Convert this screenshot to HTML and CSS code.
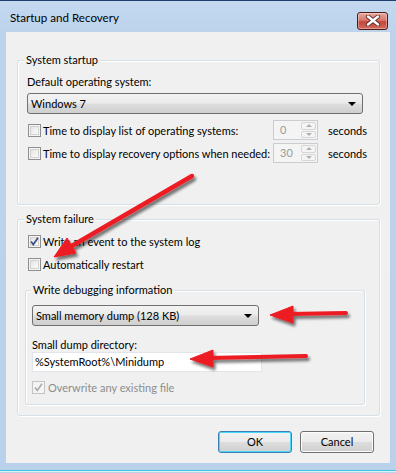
FILE: index.html
```html
<!DOCTYPE html>
<html>
<head>
<meta charset="utf-8">
<link rel="stylesheet" href="styles.css">
</head>
<body>
<div class="window">
  <div class="titlebar">
    <span class="title">Startup and Recovery</span>
    <span class="close">
      <svg width="16" height="11" viewBox="0 0 16 11">
        <path d="M3 1.5 L13 9.5 M13 1.5 L3 9.5" stroke="#5a2a26" stroke-width="4.2" stroke-linecap="round"/>
        <path d="M3 1.5 L13 9.5 M13 1.5 L3 9.5" stroke="#ffffff" stroke-width="2.4" stroke-linecap="round"/>
      </svg>
    </span>
  </div>
  <div class="client">
    <div class="group g1">
      <div class="legend">System startup</div>
      <div class="label l1">Default operating system:</div>
      <div class="combo combo-os"><span>Windows 7</span><i class="caret"></i></div>
      <div class="timerow r1">
        <span class="cb"></span>
        <span class="rowtext">Time to display list of operating systems:</span>
        <span class="spin"><span class="spinval">0</span><span class="spinbtns"><i class="up"></i><i class="down"></i></span></span>
        <span class="unit">seconds</span>
      </div>
      <div class="timerow r2">
        <span class="cb"></span>
        <span class="rowtext">Time to display recovery options when needed:</span>
        <span class="spin"><span class="spinval">30</span><span class="spinbtns"><i class="up"></i><i class="down"></i></span></span>
        <span class="unit">seconds</span>
      </div>
    </div>

    <div class="group g2">
      <div class="legend">System failure</div>
      <div class="checkrow c1"><span class="cb checked"><svg width="11" height="11" viewBox="0 0 11 11"><path d="M2 5.5 L4.3 8.5 L9 1.8" fill="none" stroke="#3d4f86" stroke-width="1.8"/></svg></span><span>Write an event to the system log</span></div>
      <div class="checkrow c2"><span class="cb"></span><span>Automatically restart</span></div>

      <div class="group g3">
        <div class="legend">Write debugging information</div>
        <div class="combo combo-dump"><span>Small memory dump (128 KB)</span><i class="caret"></i></div>
        <div class="label l2">Small dump directory:</div>
        <div class="textbox">%SystemRoot%\Minidump</div>
        <div class="checkrow c3 disabled"><span class="cb dis"><svg width="11" height="11" viewBox="0 0 11 11"><path d="M2 5.5 L4.3 8.5 L9 1.8" fill="none" stroke="#a8a8a8" stroke-width="1.5"/></svg></span><span>Overwrite any existing file</span></div>
      </div>
    </div>

    <div class="buttons">
      <div class="btn default">OK</div>
      <div class="btn">Cancel</div>
    </div>
  </div>
  <div class="bottomline"></div>

  <svg class="arrows" width="396" height="473" viewBox="0 0 396 473">
    <defs>
      <filter id="sh" x="-20%" y="-20%" width="140%" height="160%">
        <feGaussianBlur in="SourceAlpha" stdDeviation="1.6"/>
        <feOffset dx="2" dy="3" result="b"/>
        <feComponentTransfer><feFuncA type="linear" slope="0.55"/></feComponentTransfer>
        <feMerge><feMergeNode/><feMergeNode in="SourceGraphic"/></feMerge>
      </filter>
    </defs>
    <g filter="url(#sh)" fill="#ec1b23" stroke="#ec1b23">
      <line x1="192" y1="176" x2="70" y2="247" stroke-width="4.5" stroke-linecap="round"/>
      <polygon points="54,257 76,253 67,238" stroke-width="1"/>
      <line x1="346" y1="313" x2="288" y2="314" stroke-width="4" stroke-linecap="round"/>
      <polygon points="270,315 293,306 293,323" stroke-width="1"/>
      <line x1="306" y1="356" x2="208" y2="358" stroke-width="4" stroke-linecap="round"/>
      <polygon points="190,359 213,350 213,367" stroke-width="1"/>
    </g>
  </svg>
</div>
</body>
</html>
```

FILE: styles.css
```css
* { box-sizing: border-box; }
html, body { margin: 0; padding: 0; background: #ffffff; }
body {
  font-family: Lato, "Liberation Sans", sans-serif;
  font-size: 11px;
  color: #000;
}
.window {
  position: relative;
  width: 396px;
  height: 473px;
  background: linear-gradient(#c4d9f0 0px, #bcd3ec 32px, #b9d1ea 100%);
  border-top: 1px solid #1d3f6e;
}
.titlebar {
  height: 31px;
  display: flex;
  align-items: center;
  justify-content: space-between;
  padding: 0 8px 0 10px;
}
.title {
  font-size: 11.6px;
  line-height: 16px;
  margin-top: 2px;
}
.close {
  width: 31px;
  height: 18px;
  margin-top: 8px;
  border: 1px solid #4e1a16;
  border-radius: 3px;
  background: linear-gradient(#e8a99d 0%, #d9786c 45%, #c7453a 55%, #d06a5c 100%);
  display: flex;
  align-items: center;
  justify-content: center;
  box-shadow: inset 0 0 0 1px rgba(255,255,255,0.35);
}
.close svg { display: block; }
.client {
  margin: 0 6px;
  height: 431px;
  background: #f0f0f0;
  padding-top: 28px;
}
.bottomline {
  margin-top: 7px;
  height: 1px;
  background: #3ec2de;
  box-shadow: 0 1px 0 #d9f3f9;
}

.group {
  border: 1px solid #d5dfe5;
  border-radius: 3px;
  box-shadow: inset 1px 1px 0 #ffffff, 1px 1px 0 #ffffff;
}
.legend {
  width: fit-content;
  background: #f0f0f0;
  padding: 0 2px;
  line-height: 16px;
  margin-top: -9px;
}
.g1 {
  margin: 0 10px 0 11px;
  height: 145px;
  padding-left: 9px;
}
.g1 .legend { margin-left: -3px; }
.label { line-height: 16px; }
.l1 { margin-top: 6px; }
.combo {
  height: 21px;
  border: 1px solid #707070;
  border-radius: 3px;
  background: linear-gradient(#f3f3f3 0%, #ebebeb 48%, #dddddd 52%, #cfcfcf 100%);
  display: flex;
  align-items: center;
  justify-content: space-between;
  padding: 0 6px 0 3px;
  line-height: 16px;
}
.caret {
  width: 0; height: 0;
  border-left: 4px solid transparent;
  border-right: 4px solid transparent;
  border-top: 4px solid #000;
}
.combo-os { width: 336px; margin-top: 3px; }

.timerow {
  display: grid;
  grid-template-columns: 13px 232px 45px auto;
  column-gap: 0;
  align-items: center;
  height: 20px;
  margin-left: 1px;
}
.r1 { margin-top: 6px; }
.r2 { margin-top: 3px; }
.rowtext { padding-left: 2px; white-space: nowrap; }
.unit { padding-left: 10px; }
.spin {
  height: 20px;
  border: 1px solid #c9cdd1;
  background: #f4f4f4;
  display: flex;
  justify-content: space-between;
  padding: 1px;
}
.spinval { color: #9a9a9a; padding-left: 5px; line-height: 16px; }
.spinbtns {
  width: 15px;
  display: flex;
  flex-direction: column;
  gap: 1px;
}
.spinbtns i {
  flex: 1;
  border: 1px solid #d6d6d6;
  border-radius: 2px;
  background: #f4f4f4;
  display: flex;
  align-items: center;
  justify-content: center;
}
.spinbtns i::after {
  content: "";
  width: 0; height: 0;
  border-left: 3px solid transparent;
  border-right: 3px solid transparent;
}
.spinbtns .up::after { border-bottom: 3px solid #b0b0b0; }
.spinbtns .down::after { border-top: 3px solid #b0b0b0; }

.cb {
  width: 13px;
  height: 13px;
  border: 1px solid #8f8f8f;
  background: linear-gradient(135deg, #dcdcdc 0%, #f4f4f4 60%, #ffffff 100%);
  box-shadow: inset 0 0 0 1px #f4f4f4, inset 0 0 0 2px #d2d2d2;
  display: flex;
  align-items: center;
  justify-content: center;
}
.cb svg { display: block; }
.cb.dis {
  border-color: #c4c4c4;
  background: #f4f4f4;
  box-shadow: none;
}

.g2 {
  margin: 14px 10px 0 11px;
  height: 197px;
  padding-left: 7px;
}
.g2 > .legend { margin-left: -1px; }
.checkrow {
  display: flex;
  align-items: center;
  gap: 2px;
  height: 17px;
  white-space: nowrap;
}
.c1 { margin-top: 6px; margin-left: 3px; }
.c2 { margin-top: 6px; margin-left: 3px; }
.g3 {
  width: 340px;
  height: 115px;
  margin-top: 17px;
  padding-left: 6px;
}
.g3 .legend { margin-left: -1px; }
.combo-dump { width: 227px; margin-top: 7px; }
.l2 { margin-top: 11px; line-height: 15px; }
.textbox {
  width: 230px;
  height: 20px;
  background: #ffffff;
  border: 1px solid #e2e6ea;
  padding-left: 2px;
  line-height: 18px;
}
.c3 { margin-top: 7px; gap: 3px; }
.c3.disabled { color: #8d8d8d; }

.buttons {
  display: flex;
  justify-content: flex-end;
  gap: 8px;
  margin-top: 15px;
  padding-right: 16px;
}
.btn {
  width: 74px;
  height: 22px;
  border: 1px solid #707070;
  border-radius: 3px;
  background: linear-gradient(#f2f2f2 0%, #ebebeb 48%, #dddddd 52%, #cfcfcf 100%);
  box-shadow: inset 0 0 0 1px #fcfcfc;
  display: flex;
  align-items: center;
  justify-content: center;
  line-height: 16px;
}
.btn.default {
  border-color: #3c7fb1;
  box-shadow: inset 0 0 0 1px #48d8fb;
}

.arrows {
  position: absolute;
  left: 0;
  top: -1px;
  pointer-events: none;
}
```
